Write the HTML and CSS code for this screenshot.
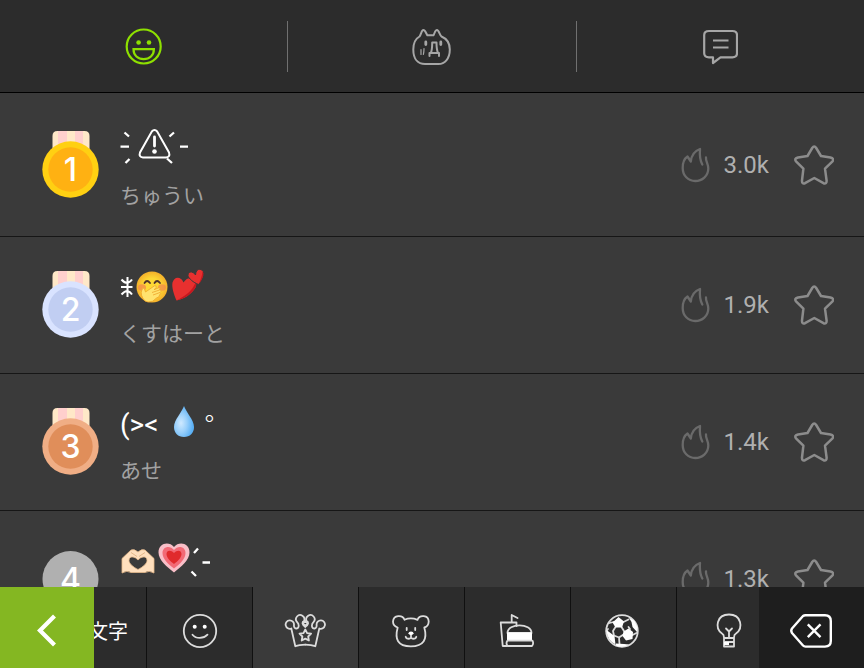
FILE: index.html
```html
<!DOCTYPE html>
<html lang="ja">
<head>
<meta charset="utf-8">
<meta name="viewport" content="width=device-width, initial-scale=1">
<title>顔文字</title>
<link rel="stylesheet" href="styles.css">
</head>
<body>
<svg class="defs" aria-hidden="true">
  <symbol id="ribbon" viewBox="0 0 57 68">
    <path fill="#ffe8c8" d="M10.500 28V6Q10.500 1 15.500 1H42.500Q47.500 1 47.500 6V28Z"/>
    <path fill="#ffcfcd" d="M16 1h9v27h-9zM33 1h8v27h-8z"/>
  </symbol>
  <symbol id="flame" viewBox="0 0 30 36">
    <path d="M26 10.500C25.500 14 28.300 17 28.300 21.500C28.300 29 22 34 15.300 34C8 34 2.700 28.500 2.700 21C2.700 15.500 4.500 11.500 7.500 9.500L10.800 14.500C11.500 8.500 14.500 4 20 2C19.500 8.500 19.800 13 22.300 17.500" fill="none" stroke="#6a6a6a" stroke-width="2.300" stroke-linecap="round" stroke-linejoin="round"/>
  </symbol>
  <symbol id="star" viewBox="0 0 40 40">
    <path d="M13.500 11L18.200 3Q20.200 0 22.200 3L27 11L36.500 12.500Q40.500 13.500 38.500 16.300L31 23.700L32.600 35.500Q32.800 39.300 29.500 38.200L20.300 33L11 38.200Q7.800 39.300 8 35.500L9.400 23.700L2 16.300Q0 13.500 4 12.500Z" fill="none" stroke="#8c8c8c" stroke-width="2.500" stroke-linejoin="round"/>
  </symbol>
</svg>

<nav class="modes">
  <button class="mode" type="button" aria-label="絵文字">
    <svg width="38" height="38" fill="none" stroke="#8ee000" stroke-width="2.200"><circle cx="18.700" cy="18.500" r="17"/><path d="M8.500 21.200h20.400c0 6-4.400 10-10.200 10S8.500 27.200 8.500 21.200z"/><g fill="#8ee000" stroke="none"><circle cx="13.600" cy="14.500" r="2.300"/><circle cx="24" cy="14.500" r="2.300"/></g></svg>
  </button>
  <button class="mode" type="button" aria-label="顔文字">
    <svg width="40" height="38" fill="none" stroke="#a6a6a6" stroke-width="2" stroke-linecap="round" stroke-linejoin="round"><path d="M7.500 8.500C9 7 9.500 2 11.300 2C13.300 2 14 5 15.300 7.300H21.500C22.800 5 23 2 25 2C27 2 27.500 7 29.500 8.500C35.500 11 37.800 16 37.800 21.500C37.800 31 32.500 36 26.500 36H13C6 36 1.300 31 1.300 21.500C1.300 16 3 11 7.500 8.500Z"/><path d="M13.800 14v2.500M28.800 14v2.500" stroke-width="2.800"/><path d="M17.500 28v-3h9.500v3M18.800 25C20.200 22 20.200 18 20.200 14.500H24.500C24.500 18 24.700 22 26 25"/><path d="M9 21.500v5M12 20.500c0 3-.3 4.500-.6 6" stroke-width="1.200"/></svg>
  </button>
  <button class="mode" type="button" aria-label="定型文">
    <svg width="36" height="36" fill="none" stroke="#a6a6a6" stroke-width="2.200" stroke-linejoin="round"><path d="M7 2H30.500Q35 2 35 6V24.300Q35 28.300 30.500 28.300H18.500L11 34V28.300H7Q2.200 28.300 2.200 24.300V6Q2.200 2 7 2Z"/><path d="M11 11.500h15.500M11 18.500h15.500"/></svg>
  </button>
</nav>

<ol class="ranking">
  <li class="entry">
    <svg class="medal" viewBox="0 0 57 68"><use href="#ribbon"/><circle cx="28.500" cy="39.500" r="28.200" fill="#ffd012"/><circle cx="28.500" cy="39.500" r="22.200" fill="#ffb112"/><text x="28.500" y="51">1</text></svg>
    <div class="words">
      <p class="face tall">
        <svg class="burst" width="68" height="36" fill="none" stroke="#fff" stroke-width="2.300" role="img" aria-label="注意"><path d="M4.500 4.500l4.500 4M9.500 31l-4 4M54 4.500l-4.500 4M47 30.500l5 4.500M.5 18.700H9M60 18.700h8"/><path d="M31.800 3.500Q34.500 .5 37.200 3.500L49 24.500Q50.500 29 46 29.500H23Q18.500 29 20 24.500Z" stroke-width="2"/><path d="M34.500 9v9" stroke-width="2.800" stroke-linecap="round"/><circle cx="34.500" cy="23.500" r="2.300" fill="#fff" stroke="none"/></svg>
      </p>
      <p class="reading">ちゅうい</p>
    </div>
    <span class="heat"><svg width="30" height="36"><use href="#flame"/></svg>3.0k</span>
    <button class="fav" type="button" aria-label="お気に入り"><svg width="40" height="40"><use href="#star"/></svg></button>
  </li>
  <li class="entry">
    <svg class="medal" viewBox="0 0 57 68"><use href="#ribbon"/><circle cx="28.500" cy="39.500" r="28.200" fill="#d9e3ff"/><circle cx="28.500" cy="39.500" r="22.200" fill="#c1cef2"/><text x="28.500" y="51">2</text></svg>
    <div class="words">
      <p class="face">
        <svg width="13" height="24" fill="none" stroke="#fff" stroke-width="2"><path d="M7.500 2v20M1 12h11.500M1.500 4.500q3 3.500 6 3.500q3-1 4.500-3.500M1.500 19.500q3-3.500 6-3.500q3 1 4.500 3.500"/></svg>
        <svg width="32" height="32" role="img" aria-label="くすくす笑う顔">
          <defs><radialGradient id="skin"><stop offset=".55" stop-color="#fdd835"/><stop offset="1" stop-color="#f4b02a"/></radialGradient></defs>
          <circle cx="16" cy="16" r="15.500" fill="url(#skin)"/>
          <g fill="#f38a4c" opacity=".75"><ellipse cx="6" cy="16.500" rx="4" ry="3.200"/><ellipse cx="26" cy="16.500" rx="4" ry="3.200"/></g>
          <path d="M8.500 12q2.500-4 5.500 0M18.500 12q2.500-4 5.500 0" fill="none" stroke="#4e342e" stroke-width="1.800" stroke-linecap="round"/>
          <path d="M9 30Q3.500 24 6 18.500Q7.500 16 8.700 18.500L9.500 21L18.500 14.800Q20.500 14 20.300 16.500L18 18.700L23 16.700Q25 17 23.500 19L24.500 19Q26 20 24 21.500Q25.500 22.500 23.500 24Q24 26 20.500 27Q17 31.500 12 31Z" fill="#ffe36e" stroke="#eda52b" stroke-width=".8"/>
          <path d="M16 21.500l7.500-2.500M17 24l7-2.500" stroke="#eda52b" stroke-width=".8"/>
        </svg>
        <svg width="34" height="40" role="img" aria-label="2つのハート">
          <path d="M5.500 33.500C3 28 .5 20 1.500 15.500Q3.500 9.500 8.500 11Q11.500 12 12.500 15.500Q16.500 9.500 21.500 12Q27 15.500 24.500 20.500C21 27 13 32 5.500 33.500Z" fill="#e8302f"/>
          <path d="M5.500 33.500C13 29.500 21 25 24.500 15.500Q26 17.500 24.500 20.500C21 27 13 32 5.500 33.500Z" fill="#c6181f"/>
          <path d="M27.500 17.500C22.500 15.500 17.500 11.500 17 8.500Q17 4.500 20.500 5Q23.500 5.500 24.500 8Q25 2 29 2.200Q33.500 3.500 32.500 8C31.800 11.500 30 15 27.500 17.500Z" fill="#e8302f" stroke="#3a3a3a" stroke-width="1"/>
          <path d="M27.500 17C29.500 13.500 31 9.500 31.500 4.500Q33 6 32.300 8.500C31.500 12 29.500 15 27.500 17Z" fill="#c6181f"/>
        </svg>
      </p>
      <p class="reading">くすはーと</p>
    </div>
    <span class="heat"><svg width="30" height="36"><use href="#flame"/></svg>1.9k</span>
    <button class="fav" type="button" aria-label="お気に入り"><svg width="40" height="40"><use href="#star"/></svg></button>
  </li>
  <li class="entry">
    <svg class="medal" viewBox="0 0 57 68"><use href="#ribbon"/><circle cx="28.500" cy="39.500" r="28.200" fill="#f0ae85"/><circle cx="28.500" cy="39.500" r="22.200" fill="#e08e5a"/><text x="28.500" y="51">3</text></svg>
    <div class="words">
      <p class="face"><span>(&gt;&lt;</span>
        <svg class="drop" width="22" height="40" role="img" aria-label="しずく"><defs><radialGradient id="water" cx=".35" cy=".55" r=".6"><stop offset="0" stop-color="#cfe9ff"/><stop offset=".5" stop-color="#9ad0fb"/><stop offset="1" stop-color="#5ab0f5"/></radialGradient></defs><path d="M11 2C13 8 21 16 21 23C21 29 17 33 11 33S1 29 1 23C1 16 9 8 11 2Z" fill="url(#water)"/></svg>
        <span class="degree">°</span></p>
      <p class="reading">あせ</p>
    </div>
    <span class="heat"><svg width="30" height="36"><use href="#flame"/></svg>1.4k</span>
    <button class="fav" type="button" aria-label="お気に入り"><svg width="40" height="40"><use href="#star"/></svg></button>
  </li>
  <li class="entry">
    <svg class="medal" viewBox="0 0 57 68"><circle cx="28.500" cy="35" r="28" fill="#b0b0b0"/><text x="28.500" y="47">4</text></svg>
    <div class="words">
      <p class="face">
        <svg width="35" height="26" role="img" aria-label="ハートの手"><path fill-rule="evenodd" fill="#ffdfbd" stroke="#e5b98b" stroke-width=".8" d="M2 25V10.500L11 2Q14 .5 18 4Q22 .5 25 2L34 10.500V25Q29 22 25 24.500H11Q7 22 2 25ZM18 21.500C13 19 9 15.500 9 12.500Q9 8.500 13 9Q16 9.500 18 12Q20 9.500 23 9Q27 8.500 27 12.500C27 15.500 23 19 18 21.500Z"/><path d="M11 4.500l6 4M25 4.500l-6 4" stroke="#e5b98b"/></svg>
        <svg width="32" height="38" role="img" aria-label="大きくなるハート"><path d="M16 30.500C9 25 .5 18 .5 10.500C.5 1 11-1 16 5C21-1 31.500 1 31.500 10.500C31.500 18 23 25 16 30.500Z" fill="#f9bfc8"/><path d="M16 26.500C10 22 4.500 17 4.500 11C4.500 4.500 12 3 16 8C20 3 27.500 4.500 27.500 11C27.500 17 22 22 16 26.500Z" fill="#f26a76"/><path d="M16 22C12 19 8.500 15.500 8.500 12C8.500 8 13 7.500 16 11C19 7.500 23.500 8 23.500 12C23.500 15.500 20 19 16 22Z" fill="#e02a2c"/></svg>
        <svg class="burst" width="20" height="36" fill="none" stroke="#fff" stroke-width="2.300"><path d="M5 5.500l-4 4.500M-1.500 28.500l4.500 4.500M9.500 19.500H17"/></svg>
      </p>
    </div>
    <span class="heat"><svg width="30" height="36"><use href="#flame"/></svg>1.3k</span>
    <button class="fav" type="button" aria-label="お気に入り"><svg width="40" height="40"><use href="#star"/></svg></button>
  </li>
</ol>

<footer class="bar">
  <button class="back" type="button" aria-label="戻る"><svg width="24" height="36"><path d="M19.500 3L5 17.500L19.500 32" fill="none" stroke="#fff" stroke-width="4.200"/></svg></button>
  <div class="categories">
    <button class="category first" type="button">文字</button>
    <button class="category" type="button" aria-label="表情"><svg width="36" height="36"><circle cx="18" cy="18" r="16.200"/><g class="solid"><circle cx="12.700" cy="13.700" r="2"/><circle cx="22.700" cy="13.700" r="2"/></g><path d="M10.500 21.700C14 26 21.500 26 25.500 21.700"/></svg></button>
    <button class="category current" type="button" aria-label="ランキング"><svg width="44" height="36"><g id="half-crown"><path d="M21.300 31.600Q15 31.700 11.300 33.200L7.300 15.500A4.200 4.200 0 1 1 10 12C9.500 16.500 14.500 16.500 14.700 13Q14.800 10.500 13 9A4.200 4.200 0 1 1 20 8C17.500 9 18.500 12.500 21.300 13.800"/></g><use href="#half-crown" transform="translate(42.600 0) scale(-1 1)"/><path d="M21.300 8l2 2.500l-2 2.500l-2-2.500zM21.300 16.500l1.800 3.600l4 .6l-2.900 2.800l.7 4l-3.600-1.900l-3.600 1.900l.7-4l-2.900-2.800l4-.6z"/></svg></button>
    <button class="category" type="button" aria-label="動物"><svg width="44" height="36"><path d="M14.500 6.800Q20.700 4 27.500 6.800C29.500 1.500 38.500 2 38.700 8.500Q38.500 13.500 34.300 14.500C37.500 26 34 33.300 20.800 33.300S4.500 26 7.700 14.500Q3 13 3 8.500C3.500 2 12.500 1.500 14.500 6.800Z"/><path d="M16.700 14.800v2.200M25.200 14.800v2.200M21 21v4M15.700 23.800Q17 27 21 25Q25 27 26.300 23.800"/><ellipse class="solid" cx="21" cy="20.300" rx="2.500" ry="1.800"/></svg></button>
    <button class="category" type="button" aria-label="食べ物"><svg width="40" height="36"><path d="M8.700 33H4.700L2.700 9.500H18.500V13M13.700 9.500V2L19.500 5"/><path d="M9.500 20C9.500 9.800 33.500 9.800 33.500 20Z"/><path class="solid" d="M9 19.500h25v7.500h-25z"/><path d="M9.500 27.700H34.500Q36 30.500 34 33H9.500Q7.500 30 9.500 27.700Z"/></svg></button>
    <button class="category" type="button" aria-label="スポーツ"><svg width="40" height="36"><circle cx="18" cy="18" r="15.800"/><path d="M19.500 9L24.500 6.500M17.500 14L20 18M11.500 14L9 18L10 22.500M10 22.500L15 24.500M15 24.500L19.500 21.500M15 24.500L15.500 31M26 16L24.500 14M28.500 22L32.500 20M5.500 10L9.500 9M2.500 18L4 16"/><g class="solid"><path d="M14.500 4L20 8.500L18 14.500L11.500 14.500L8.500 9.500ZM24.500 4L30.500 8L33.500 14.500L33 19L28.500 14L27.500 9ZM19.500 18.500L24.500 15.500L29 19L28.500 26L22 27.500L18.500 23ZM2.500 17L6.500 20L10.500 23L11.500 31.500Q3 27 2.500 17ZM12 30.500L20 31L25 31.500Q18 35.500 12 32.500Z"/></g></svg></button>
    <button class="category" type="button" aria-label="もの"><svg width="32" height="36"><path d="M10 24.500Q10 21.500 8 20.500C.5 15 2.500 1.500 15 1.500S29.500 15 22 20.500Q20 21.500 20 24.500V33.500H10ZM10 25h10M10 29h10M12 15.500L15 18.500L18 15.500M15 18.500V25"/><path class="solid" d="M10 29h5v3h-5z"/></svg></button>
  </div>
  <button class="delete" type="button" aria-label="削除"><svg width="46" height="36" fill="none" stroke="#fff" stroke-width="2.400" stroke-linejoin="round"><path d="M3 15.500L14 3Q15 2.200 16.500 2.200H36Q41.800 2.200 41.800 8V28Q41.800 33.600 36 33.600H16.500Q15 33.600 14 32.500L3 20Q1.500 17.700 3 15.500Z"/><path d="M18.800 11.300L31.500 24.200M31.500 11.300L18.800 24.200"/></svg></button>
</footer>
</body>
</html>
```

FILE: styles.css
```css
* {
  box-sizing: border-box;
}

body {
  margin: 0;
  height: 100vh;
  display: flex;
  flex-direction: column;
  overflow: hidden;
  background: #3a3a3a;
  color: #fff;
  font-family: Roboto, "Noto Sans CJK JP", sans-serif;
}

button {
  border: 0;
  margin: 0;
  padding: 0;
  background: none;
  color: inherit;
  font: inherit;
}

svg {
  display: block;
  flex: none;
}

.defs {
  display: none;
}

.modes {
  flex: none;
  display: flex;
  background: #2c2c2c;
  border-bottom: 1px solid #000;
  padding: 21px 0 20px;
}

.mode {
  flex: 1;
  height: 51px;
  display: flex;
  align-items: center;
  justify-content: center;
  border-right: 1px solid #707070;
}

.mode:last-child {
  border-right: 0;
}

.ranking {
  flex: 1;
  min-height: 0;
  overflow: hidden;
  margin: 0;
  padding: 0;
  list-style: none;
}

.entry {
  display: flex;
  align-items: center;
  padding: 26px 30px 26px 42px;
  border-bottom: 1px solid #161616;
}

.medal {
  width: 57px;
  height: 68px;
  margin: 0 21px 2px 0;
}

.medal text {
  fill: #fff;
  font: 500 32px Inter, sans-serif;
  text-anchor: middle;
}

.words {
  flex: 1;
  min-width: 0;
  min-height: 84px;
}

.face {
  margin: 0;
  height: 48px;
  display: flex;
  align-items: center;
  gap: 3px;
  font-size: 28px;
}

.face.tall {
  height: 54px;
}

.face.tall + .reading {
  padding-bottom: 1px;
}

.burst {
  overflow: visible;
}

.drop {
  margin: 0 6px 0 12px;
}

.degree {
  font-family: "Noto Sans CJK JP", sans-serif;
  font-weight: 300;
}

.reading {
  margin: 6px 0 0;
  font-family: "Noto Sans CJK JP", sans-serif;
  font-size: 21px;
  line-height: 30px;
  color: #a2a2a2;
}

.heat {
  display: flex;
  align-items: center;
  gap: 14px;
  margin-right: 25px;
  font-size: 24px;
  color: #b0b0b0;
}

.bar {
  flex: none;
  height: 81px;
  display: flex;
  background: #2c2c2c;
}

.back,
.category,
.delete {
  padding-top: 6px;
}

.back {
  flex: none;
  width: 94px;
  display: grid;
  place-items: center;
  background: #84b722;
}

.categories {
  flex: 1;
  min-width: 0;
  display: flex;
  overflow: hidden;
}

.category {
  flex: none;
  width: 106px;
  display: flex;
  align-items: center;
  justify-content: center;
  border-right: 1px solid #101010;
}

.category.first {
  width: 53px;
  justify-content: flex-end;
  padding-right: 18px;
  overflow: hidden;
  white-space: nowrap;
  font-family: "Noto Sans CJK JP", sans-serif;
  font-size: 20px;
}

.category.current {
  background: #3a3a3a;
}

.category svg {
  fill: none;
  stroke: #dcdcdc;
  stroke-width: 1.8;
  stroke-linecap: round;
  stroke-linejoin: round;
}

.category .solid {
  fill: #fff;
  stroke: none;
}

.delete {
  flex: none;
  width: 105px;
  display: grid;
  place-items: center;
  background: #1e1e1e;
}
```
